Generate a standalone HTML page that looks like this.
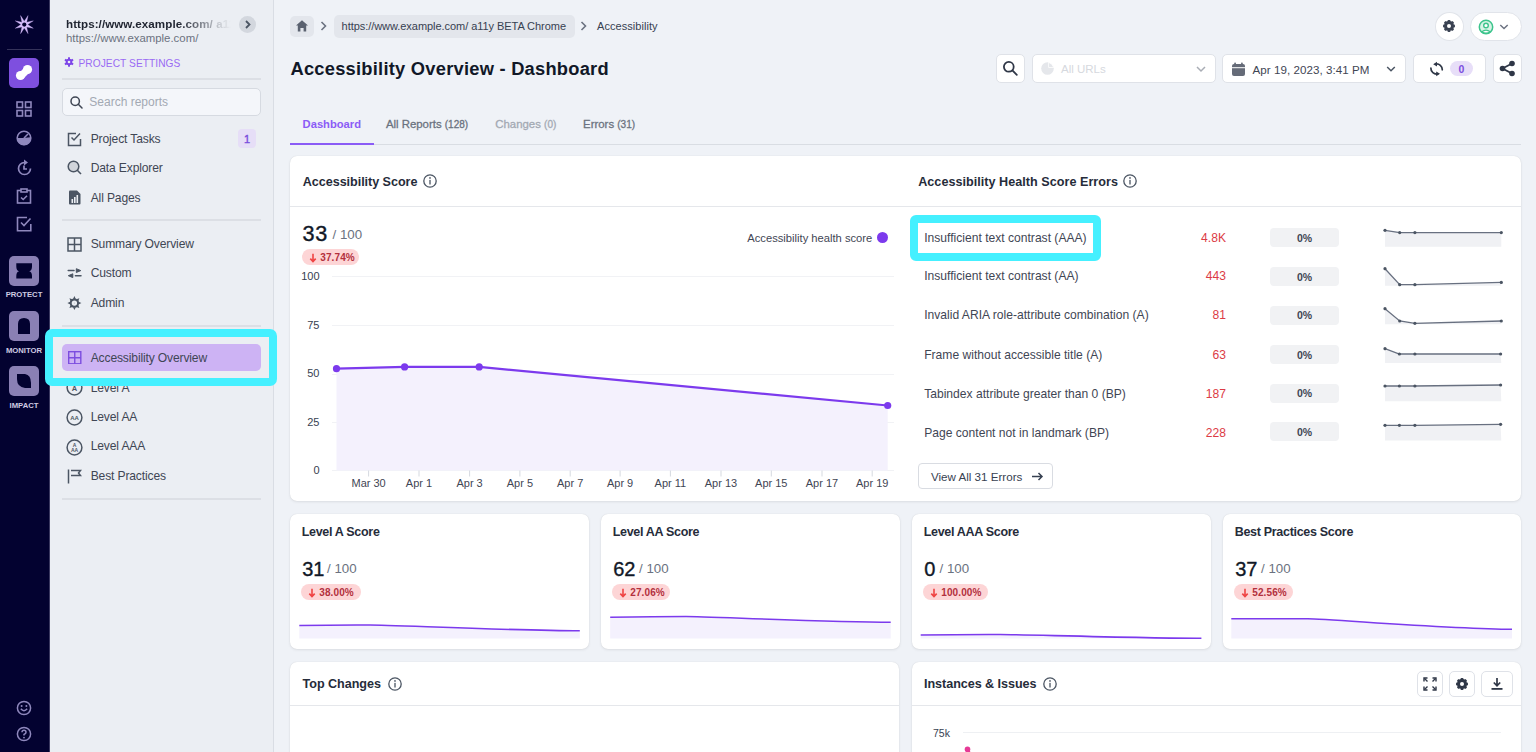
<!DOCTYPE html>
<html><head><meta charset="utf-8"><title>Accessibility Overview - Dashboard</title>
<style>
html,body{margin:0;padding:0;width:1536px;height:752px;overflow:hidden;background:#eff2f7;font-family:"Liberation Sans", sans-serif;}
.r{position:absolute;display:block;}
.t{position:absolute;white-space:nowrap;}
</style></head><body>
<div class="r" style="left:0px;top:0px;width:50px;height:752px;background:#030230;"></div>
<div class="r" style="left:49px;top:0px;width:1px;height:752px;background:#3a3860;"></div>
<svg class="r" style="left:0px;top:0px;" width="50" height="50" viewBox="0 0 50 50"><polygon points="20.55,15.55 21.90,22.20 15.25,20.85 20.90,24.60 15.25,28.35 21.90,27.00 20.55,33.65 24.30,28.00 28.05,33.65 26.70,27.00 33.35,28.35 27.70,24.60 33.35,20.85 26.70,22.20 28.05,15.55 24.30,21.20" fill="#d5bcfb" stroke="#d5bcfb" stroke-width="0.3" stroke-linejoin="round"/><circle cx="24.3" cy="24.6" r="2.1" fill="#030230"/></svg>
<div class="r" style="left:7px;top:49px;width:35px;height:1px;background:#35335a;"></div>
<div class="r" style="left:9px;top:58px;width:30px;height:30px;background:#7e4fdf;border-radius:5px;"></div>
<svg class="r" style="left:9px;top:58px;" width="30" height="30" viewBox="0 0 30 30"><g fill="#fff"><circle cx="11.5" cy="17.5" r="4.6"/><circle cx="18.5" cy="11.5" r="4.6"/><path d="M9 16 L16 9 L21 14 L14 21 Z"/></g></svg>
<svg class="r" style="left:16px;top:101px;" width="16" height="16" viewBox="0 0 16 16"><g fill="none" stroke="#8f88bd" stroke-width="1.6"><rect x="1" y="1" width="5.5" height="5.5"/><rect x="9.5" y="1" width="5.5" height="5.5"/><rect x="1" y="9.5" width="5.5" height="5.5"/><rect x="9.5" y="9.5" width="5.5" height="5.5"/></g></svg>
<svg class="r" style="left:16px;top:130px;" width="16" height="16" viewBox="0 0 16 16"><circle cx="8" cy="8" r="6.8" fill="none" stroke="#8f88bd" stroke-width="1.6"/><path d="M1.2 8 A6.8 6.8 0 0 0 14.8 8 Z" fill="#8f88bd"/><path d="M1.2 8.6 L14.8 7.2 L14.8 8.5 A6.8 6.8 0 0 1 1.2 8.5Z" fill="#8f88bd"/><path d="M8 8 L12 4" stroke="#8f88bd" stroke-width="1.6"/></svg>
<svg class="r" style="left:16px;top:159px;" width="16" height="17" viewBox="0 0 16 17"><g fill="none" stroke="#8f88bd" stroke-width="1.7"><path d="M8.5 3.5 A6 6 0 1 0 14.5 9.5"/><path d="M8 6.5 V10 H11"/></g><path d="M8 0.5 L12 3.5 L8 6.5Z" fill="#8f88bd"/></svg>
<svg class="r" style="left:16px;top:188px;" width="16" height="16" viewBox="0 0 16 16"><g fill="none" stroke="#8f88bd" stroke-width="1.6"><rect x="1.5" y="2.5" width="13" height="12.5"/><rect x="5" y="1" width="6" height="3" fill="#030230"/><path d="M5 9.5 L7.2 11.5 L11 7.8"/></g></svg>
<svg class="r" style="left:16px;top:216px;" width="16" height="16" viewBox="0 0 16 16"><g fill="none" stroke="#8f88bd" stroke-width="1.6"><path d="M11 1.5 H1.5 V14.8 H14.8 V8"/><path d="M5 6.5 L8 9.5 L14.5 2.5"/></g></svg>
<div class="r" style="left:9px;top:256px;width:30px;height:30px;background:#8a80b4;border-radius:5px;"></div>
<svg class="r" style="left:9px;top:256px;" width="30" height="30" viewBox="0 0 30 30"><path d="M7.3 7.3 H23 V10.5 Q23 14.5 20.2 15.2 Q23 16 23 20 V22.6 H7.3 V20 Q7.3 16 10.1 15.2 Q7.3 14.5 7.3 10.5 Z" fill="#030230"/></svg>
<div class="t" style="left:-76px;width:200px;text-align:center;top:291.28px;font-size:7.7px;line-height:7.7px;color:#cfcbe2;font-weight:700;">PROTECT</div>
<div class="r" style="left:9px;top:311px;width:30px;height:30px;background:#8a80b4;border-radius:5px;"></div>
<svg class="r" style="left:9px;top:311px;" width="30" height="30" viewBox="0 0 30 30"><path d="M9 23 V13 Q9 7 15 7 Q21 7 21 13 V23 Z" fill="#030230"/></svg>
<div class="t" style="left:-76px;width:200px;text-align:center;top:346.78px;font-size:7.7px;line-height:7.7px;color:#cfcbe2;font-weight:700;">MONITOR</div>
<div class="r" style="left:9px;top:366px;width:30px;height:30px;background:#8a80b4;border-radius:5px;"></div>
<svg class="r" style="left:9px;top:366px;" width="30" height="30" viewBox="0 0 30 30"><path d="M8 8 H16 Q22 9 22 17 V22 H16 Q8 21 8 13 Z" fill="#030230"/></svg>
<div class="t" style="left:-76px;width:200px;text-align:center;top:401.78px;font-size:7.7px;line-height:7.7px;color:#cfcbe2;font-weight:700;">IMPACT</div>
<svg class="r" style="left:16px;top:700px;" width="16" height="16" viewBox="0 0 16 16"><g fill="none" stroke="#8f88bd" stroke-width="1.5"><circle cx="8" cy="8" r="6.6"/><path d="M4.8 8.8 Q8 12.5 11.2 8.8"/></g><circle cx="5.6" cy="6" r="1" fill="#8f88bd"/><circle cx="10.4" cy="6" r="1" fill="#8f88bd"/></svg>
<svg class="r" style="left:16px;top:726px;" width="16" height="16" viewBox="0 0 16 16"><g fill="none" stroke="#8f88bd" stroke-width="1.5"><circle cx="8" cy="8" r="6.6"/><path d="M6 6.3 Q6 4.3 8 4.3 Q10 4.3 10 6.2 Q10 7.6 8 8.4 V9.6"/></g><circle cx="8" cy="11.6" r="0.9" fill="#8f88bd"/></svg>
<div class="r" style="left:50px;top:0px;width:223px;height:752px;background:#ebeef3;"></div>
<div class="r" style="left:273px;top:0px;width:1px;height:752px;background:#d9dde4;"></div>
<div class="t" style="left:66px;top:17px;width:165px;overflow:hidden;white-space:nowrap;font-size:11.6px;line-height:13px;letter-spacing:0.07px;font-weight:700;color:#1f2430;-webkit-mask-image:linear-gradient(90deg,#000 0,#000 112px,rgba(0,0,0,.55) 135px,rgba(0,0,0,.15) 155px,transparent 165px);">https://www.example.com/ a11y</div>
<div class="t" style="left:66px;top:32.85px;font-size:11.4px;line-height:11.4px;color:#6b7280;font-weight:400;">https://www.example.com/</div>
<div class="r" style="left:239px;top:16px;width:17px;height:17px;background:#d3d7de;border-radius:50%;"></div>
<svg class="r" style="left:239px;top:16px;" width="17" height="17" viewBox="0 0 17 17"><path d="M7 5 L10.5 8.5 L7 12" fill="none" stroke="#4b5563" stroke-width="1.8"/></svg>
<svg class="r" style="left:64px;top:57px;" width="10" height="10" viewBox="0 0 10 10"><g fill="#7d45e8"><circle cx="5" cy="5" r="3.3"/><rect x="4" y="0.3" width="2" height="9.4"/><rect x="4" y="0.3" width="2" height="9.4" transform="rotate(60 5 5)"/><rect x="4" y="0.3" width="2" height="9.4" transform="rotate(120 5 5)"/></g><circle cx="5" cy="5" r="1.3" fill="#ebeef3"/></svg>
<div class="t" style="left:78.5px;top:58.77px;font-size:10.2px;line-height:10.2px;color:#9a6af3;font-weight:400;letter-spacing:0.05px;">PROJECT SETTINGS</div>
<div class="r" style="left:62px;top:78px;width:199px;height:2px;background:#dcdfe5;"></div>
<div class="r" style="left:62px;top:88px;width:199px;height:28px;background:#f4f6fa;border:1px solid #d6dae1;border-radius:5px;box-sizing:border-box;"></div>
<svg class="r" style="left:69px;top:95px;" width="15" height="14" viewBox="0 0 15 14"><g fill="none" stroke="#3f4654" stroke-width="1.5"><circle cx="6.2" cy="6.2" r="4.2"/><path d="M9.3 9.3 L13 13" stroke-linecap="round"/></g></svg>
<div class="t" style="left:89.3px;top:95.84px;font-size:12px;line-height:12px;color:#a3a9b3;font-weight:400;">Search reports</div>
<svg class="r" style="left:67px;top:132px;" width="15" height="15" viewBox="0 0 15 15"><g fill="none" stroke="#4b5563" stroke-width="1.5"><path d="M9 1.5 H1.5 V13.5 H13.5 V7"/><path d="M4.5 5.5 L7 8 L13 1.5"/></g></svg>
<div class="t" style="left:90.7px;top:133.16px;font-size:12.1px;line-height:12.1px;color:#3f4654;font-weight:400;letter-spacing:-0.15px;">Project Tasks</div>
<div class="r" style="left:238px;top:129px;width:18px;height:19px;background:#e6def7;border-radius:4px;"></div>
<div class="t" style="left:147px;width:200px;text-align:center;top:133.69px;font-size:11px;line-height:11px;color:#7a50dd;font-weight:400;-webkit-text-stroke:0.4px #7a50dd;">1</div>
<svg class="r" style="left:67px;top:160px;" width="15" height="15" viewBox="0 0 15 15"><circle cx="6.5" cy="6.5" r="5.3" fill="#d1d5db" stroke="#4b5563" stroke-width="1.5"/><path d="M10.3 10.3 L14 14" stroke="#4b5563" stroke-width="1.6"/></svg>
<div class="t" style="left:90.7px;top:162.46px;font-size:12.1px;line-height:12.1px;color:#3f4654;font-weight:400;letter-spacing:-0.15px;">Data Explorer</div>
<svg class="r" style="left:68px;top:190px;" width="14" height="15" viewBox="0 0 14 15"><path d="M1 1.5 Q1 0.5 2 0.5 H9 L12.5 4 V13.5 Q12.5 14.5 11.5 14.5 H2 Q1 14.5 1 13.5Z" fill="#4b5563"/><g fill="#ebeef3"><rect x="3.5" y="9" width="1.6" height="4"/><rect x="6" y="7" width="1.6" height="6"/><rect x="8.5" y="5" width="1.6" height="8"/></g></svg>
<div class="t" style="left:90.7px;top:191.76px;font-size:12.1px;line-height:12.1px;color:#3f4654;font-weight:400;letter-spacing:-0.15px;">All Pages</div>
<div class="r" style="left:62px;top:219px;width:199px;height:2px;background:#dcdfe5;"></div>
<svg class="r" style="left:67px;top:237px;" width="15" height="15" viewBox="0 0 15 15"><g fill="none" stroke="#4b5563" stroke-width="1.5"><rect x="1" y="1" width="13" height="13"/><path d="M7.5 1 V14 M1 7.5 H14"/></g></svg>
<div class="t" style="left:90.7px;top:237.76px;font-size:12.1px;line-height:12.1px;color:#3f4654;font-weight:400;letter-spacing:-0.15px;">Summary Overview</div>
<svg class="r" style="left:67px;top:264px;" width="15" height="15" viewBox="0 0 15 15"><g stroke="#4b5563" stroke-width="1.5" stroke-linecap="round"><path d="M1.2 6.6 H7 M8.4 11.7 H14"/></g><g fill="#4b5563" stroke="#4b5563" stroke-width="1" stroke-linejoin="round"><path d="M9.3 4.7 L13.8 6.6 L9.3 8.5Z"/><path d="M5.8 9.8 L1.3 11.7 L5.8 13.6Z"/></g></svg>
<div class="t" style="left:90.7px;top:267.46px;font-size:12.1px;line-height:12.1px;color:#3f4654;font-weight:400;letter-spacing:-0.15px;">Custom</div>
<svg class="r" style="left:67px;top:296px;" width="15" height="15" viewBox="0 0 15 15"><path d="M14.40 7.10 L11.47 5.71 L11.47 8.49Z M12.35 12.05 L11.26 8.99 L9.29 10.96Z M7.40 14.10 L8.79 11.17 L6.01 11.17Z M2.45 12.05 L5.51 10.96 L3.54 8.99Z M0.40 7.10 L3.33 8.49 L3.33 5.71Z M2.45 2.15 L3.54 5.21 L5.51 3.24Z M7.40 0.10 L6.01 3.03 L8.79 3.03Z M12.35 2.15 L9.29 3.24 L11.26 5.21Z " fill="#4b5563"/><circle cx="7.4" cy="7.1" r="3.7" fill="none" stroke="#4b5563" stroke-width="2"/><circle cx="7.4" cy="7.1" r="0.6" fill="#c0c4cc"/></svg>
<div class="t" style="left:90.7px;top:297.06px;font-size:12.1px;line-height:12.1px;color:#3f4654;font-weight:400;letter-spacing:-0.15px;">Admin</div>
<div class="r" style="left:62px;top:325px;width:199px;height:2px;background:#dcdfe5;"></div>
<svg class="r" style="left:66px;top:379px;" width="17" height="17" viewBox="0 0 17 17"><circle cx="8.5" cy="8.5" r="7.4" fill="none" stroke="#4b5563" stroke-width="1.5"/><text x="8.5" y="11.5" font-size="7.5" font-family="Liberation Sans" font-weight="700" fill="#4b5563" text-anchor="middle">A</text></svg>
<div class="t" style="left:90.7px;top:381.76px;font-size:12.1px;line-height:12.1px;color:#3f4654;font-weight:400;letter-spacing:-0.15px;">Level A</div>
<svg class="r" style="left:66px;top:409px;" width="17" height="17" viewBox="0 0 17 17"><circle cx="8.5" cy="8.5" r="7.4" fill="none" stroke="#4b5563" stroke-width="1.5"/><text x="8.5" y="11" font-size="6" font-family="Liberation Sans" font-weight="700" fill="#4b5563" text-anchor="middle">AA</text></svg>
<div class="t" style="left:90.7px;top:410.56px;font-size:12.1px;line-height:12.1px;color:#3f4654;font-weight:400;letter-spacing:-0.15px;">Level AA</div>
<svg class="r" style="left:66px;top:438.5px;" width="17" height="17" viewBox="0 0 17 17"><circle cx="8.5" cy="8.5" r="7.4" fill="none" stroke="#4b5563" stroke-width="1.5"/><text x="8.5" y="8" font-size="5" font-family="Liberation Sans" font-weight="700" fill="#4b5563" text-anchor="middle">A</text><text x="8.5" y="13" font-size="5" font-family="Liberation Sans" font-weight="700" fill="#4b5563" text-anchor="middle">AA</text></svg>
<div class="t" style="left:90.7px;top:440.36px;font-size:12.1px;line-height:12.1px;color:#3f4654;font-weight:400;letter-spacing:-0.15px;">Level AAA</div>
<svg class="r" style="left:67px;top:469px;" width="15" height="15" viewBox="0 0 15 15"><g fill="none" stroke="#4b5563" stroke-width="1.5"><path d="M1.5 0.5 V14.5"/><path d="M4 1.5 H13.5 L11.5 4 L13.5 6.5 H4"/></g></svg>
<div class="t" style="left:90.7px;top:469.96px;font-size:12.1px;line-height:12.1px;color:#3f4654;font-weight:400;letter-spacing:-0.15px;">Best Practices</div>
<div class="r" style="left:62px;top:498px;width:199px;height:2px;background:#dcdfe5;"></div>
<div class="r" style="left:62px;top:344px;width:199px;height:27px;background:#cdb3f4;border-radius:5px;"></div>
<svg class="r" style="left:68px;top:350.5px;" width="13.5" height="13.5" viewBox="0 0 13.5 13.5"><g fill="none" stroke="#7c4ddf" stroke-width="1.4"><rect x="0.7" y="0.7" width="12.1" height="12.1"/><path d="M6.75 0.7 V12.8 M0.7 6.75 H12.8"/></g></svg>
<div class="t" style="left:90.7px;top:351.76px;font-size:12.1px;line-height:12.1px;color:#3f4654;font-weight:400;letter-spacing:-0.15px;">Accessibility Overview</div>
<div class="r" style="left:45px;top:329px;width:232px;height:57px;border:8px solid #45f0ff;border-radius:7px;box-sizing:border-box;z-index:20;"></div>
<div class="r" style="left:274px;top:0px;width:1262px;height:752px;background:#eff2f7;"></div>
<div class="r" style="left:290px;top:16px;width:24px;height:21px;background:#e3e6ec;border-radius:5px;"></div>
<svg class="r" style="left:294px;top:18px;" width="16" height="16" viewBox="0 0 16 16"><path d="M8 2.2 L14 7.6 H12.2 V13.5 H9.6 V10 H6.4 V13.5 H3.8 V7.6 H2 Z" fill="#5b6270"/></svg>
<svg class="r" style="left:318px;top:18px;" width="12" height="16" viewBox="0 0 12 16"><path d="M3.5 4 L7.5 8 L3.5 12" fill="none" stroke="#6b7280" stroke-width="1.6"/></svg>
<div class="r" style="left:334px;top:15px;width:241px;height:22.5px;background:#e3e6ec;border-radius:5px;"></div>
<div class="t" style="left:341.6px;top:20.69px;font-size:11px;line-height:11px;color:#374151;font-weight:400;letter-spacing:-0.05px;">https://www.example.com/ a11y BETA Chrome</div>
<svg class="r" style="left:578px;top:18px;" width="12" height="16" viewBox="0 0 12 16"><path d="M3.5 4 L7.5 8 L3.5 12" fill="none" stroke="#6b7280" stroke-width="1.6"/></svg>
<div class="t" style="left:597px;top:20.69px;font-size:11px;line-height:11px;color:#374151;font-weight:400;letter-spacing:0.05px;">Accessibility</div>
<div class="t" style="left:290.5px;top:59.51px;font-size:18.3px;line-height:18.3px;color:#111827;font-weight:700;letter-spacing:0.25px;">Accessibility Overview - Dashboard</div>
<div class="r" style="left:1434.5px;top:12.3px;width:29px;height:28.5px;background:#fff;border:1px solid #e1e4ea;border-radius:50%;box-sizing:border-box;"></div>
<svg class="r" style="left:1441px;top:18.3px;" width="16" height="16" viewBox="0 0 16 16"><g fill="#3a4252"><circle cx="8" cy="8" r="4.9"/><rect x="6.5" y="2" width="3" height="12" rx="1"/><rect x="6.5" y="2" width="3" height="12" rx="1" transform="rotate(45 8 8)"/><rect x="6.5" y="2" width="3" height="12" rx="1" transform="rotate(90 8 8)"/><rect x="6.5" y="2" width="3" height="12" rx="1" transform="rotate(135 8 8)"/></g><circle cx="8" cy="8" r="2" fill="#fff"/></svg>
<div class="r" style="left:1470px;top:12.3px;width:51.5px;height:28.5px;background:#fff;border:1px solid #e1e4ea;border-radius:14.5px;box-sizing:border-box;"></div>
<svg class="r" style="left:1478px;top:18.5px;" width="16" height="16" viewBox="0 0 16 16"><circle cx="8" cy="8" r="6.7" fill="#d8f3e6" stroke="#3cc48c" stroke-width="1.5"/><g fill="#fff" stroke="#3cc48c" stroke-width="1.4"><circle cx="8" cy="6.5" r="2.3"/><path d="M3.8 12.8 Q8 9.4 12.2 12.8 Q8 15.6 3.8 12.8Z"/></g></svg>
<svg class="r" style="left:1498px;top:21.5px;" width="12" height="10" viewBox="0 0 12 10"><path d="M2.3 3 L6 6.6 L9.7 3" fill="none" stroke="#6b7280" stroke-width="1.4"/></svg>
<div class="r" style="left:996px;top:54px;width:29px;height:29px;background:#fff;border:1px solid #dfe2e8;border-radius:5px;box-sizing:border-box;"></div>
<svg class="r" style="left:1002px;top:60px;" width="17" height="17" viewBox="0 0 17 17"><g fill="none" stroke="#2f3747" stroke-width="1.8"><circle cx="6.8" cy="6.8" r="4.9"/><path d="M10.4 10.4 L14.8 14.8" stroke-linecap="round"/></g></svg>
<div class="r" style="left:1032px;top:54px;width:184px;height:29px;background:#fff;border:1px solid #dfe2e8;border-radius:5px;box-sizing:border-box;"></div>
<svg class="r" style="left:1040px;top:61px;" width="15" height="15" viewBox="0 0 15 15"><circle cx="7.5" cy="7.5" r="6.3" fill="#e5e7eb"/><path d="M8.3 1 A6.5 6.5 0 0 1 14 6.7 H8.3Z" fill="#fff"/><path d="M9 2 A5.5 5.5 0 0 1 13 6 H9Z" fill="#e5e7eb"/></svg>
<div class="t" style="left:1061px;top:64.27px;font-size:11.5px;line-height:11.5px;color:#d6d9de;font-weight:400;">All URLs</div>
<svg class="r" style="left:1194.5px;top:63.5px;" width="12" height="10" viewBox="0 0 12 10"><path d="M2 3 L6 7 L10 3" fill="none" stroke="#a9adb5" stroke-width="1.5"/></svg>
<div class="r" style="left:1222px;top:54px;width:184px;height:29px;background:#fff;border:1px solid #dfe2e8;border-radius:5px;box-sizing:border-box;"></div>
<svg class="r" style="left:1231px;top:61px;" width="16" height="16" viewBox="0 0 16 16"><rect x="1" y="3" width="13" height="12" rx="2" fill="#656b78"/><rect x="1" y="6.2" width="13" height="1" fill="#fff"/><rect x="3.3" y="1.6" width="1.6" height="3" rx="0.6" fill="#656b78"/><rect x="10.1" y="1.6" width="1.6" height="3" rx="0.6" fill="#656b78"/></svg>
<div class="t" style="left:1252.5px;top:63.98px;font-size:11.6px;line-height:11.6px;color:#3f4654;font-weight:400;letter-spacing:0.05px;">Apr 19, 2023, 3:41 PM</div>
<svg class="r" style="left:1385px;top:63.5px;" width="12" height="10" viewBox="0 0 12 10"><path d="M2.2 3 L6 6.8 L9.8 3" fill="none" stroke="#4b5563" stroke-width="1.5"/></svg>
<div class="r" style="left:1413px;top:54px;width:73px;height:29px;background:#fff;border:1px solid #dfe2e8;border-radius:5px;box-sizing:border-box;"></div>
<svg class="r" style="left:1428px;top:61px;" width="16" height="16" viewBox="0 0 16 16"><g fill="none" stroke="#2f3747" stroke-width="1.7" stroke-linecap="round"><path d="M14.3 8.8 A5.6 5.6 0 0 0 7.6 3.1"/><path d="M2.9 7.2 A5.6 5.6 0 0 0 9.6 12.9"/></g><path d="M9 0.8 L5.2 3.2 L9 5.6Z" fill="#2f3747"/><path d="M8.2 10.4 L12 12.8 L8.2 15.2Z" fill="#2f3747"/></svg>
<div class="r" style="left:1450px;top:61px;width:23px;height:15px;background:#e7def8;border-radius:8px;"></div>
<div class="t" style="left:1361.5px;width:200px;text-align:center;top:63.61px;font-size:10.5px;line-height:10.5px;color:#7c4ddf;font-weight:700;">0</div>
<div class="r" style="left:1492.5px;top:54px;width:29px;height:29px;background:#fff;border:1px solid #dfe2e8;border-radius:5px;box-sizing:border-box;"></div>
<svg class="r" style="left:1499px;top:60px;" width="17" height="17" viewBox="0 0 17 17"><g fill="#2f3747"><circle cx="13" cy="3.5" r="2.8"/><circle cx="3.5" cy="8.5" r="2.8"/><circle cx="13" cy="13.5" r="2.8"/></g><path d="M13 3.5 L3.5 8.5 L13 13.5" fill="none" stroke="#2f3747" stroke-width="1.8"/></svg>
<div class="t" style="left:302.6px;top:118.82px;font-size:11.2px;line-height:11.2px;color:#8b5cf6;font-weight:700;">Dashboard</div>
<div class="t" style="left:385.9px;top:118.65px;font-size:11.4px;line-height:11.4px;color:#6b7280;font-weight:400;-webkit-text-stroke:0.3px #6b7280;">All Reports <span style="font-size:10px">(128)</span></div>
<div class="t" style="left:495.3px;top:118.65px;font-size:11.4px;line-height:11.4px;color:#a3a9b3;font-weight:400;-webkit-text-stroke:0.3px #a3a9b3;">Changes <span style="font-size:10px">(0)</span></div>
<div class="t" style="left:583.1px;top:118.65px;font-size:11.4px;line-height:11.4px;color:#6b7280;font-weight:400;-webkit-text-stroke:0.3px #6b7280;">Errors <span style="font-size:10px">(31)</span></div>
<div class="r" style="left:290px;top:143.5px;width:1231px;height:1px;background:#d9dde3;"></div>
<div class="r" style="left:290px;top:142.5px;width:84px;height:2px;background:#8b5cf6;"></div>
<div class="r" style="left:290px;top:156px;width:1231px;height:345px;background:#fff;border-radius:7px;box-shadow:0 1px 3px rgba(0,0,0,0.08),0 0 1px rgba(0,0,0,0.12);"></div>
<div class="r" style="left:290px;top:206px;width:1231px;height:1px;background:#e5e7eb;"></div>
<div class="t" style="left:302.8px;top:175.63px;font-size:12.6px;line-height:12.6px;color:#262c3a;font-weight:700;letter-spacing:-0.05px;">Accessibility Score</div>
<svg class="r" style="left:423px;top:174px;" width="14" height="14" viewBox="0 0 14 14"><circle cx="7.0" cy="7.0" r="6.2" fill="none" stroke="#4b5563" stroke-width="1.3"/><rect x="6.35" y="5.88" width="1.3" height="4.62" fill="#4b5563"/><circle cx="7.0" cy="3.9200000000000004" r="0.85" fill="#4b5563"/></svg>
<div class="t" style="left:918.2px;top:175.63px;font-size:12.6px;line-height:12.6px;color:#262c3a;font-weight:700;letter-spacing:0.03px;">Accessibility Health Score Errors</div>
<svg class="r" style="left:1123px;top:174px;" width="14" height="14" viewBox="0 0 14 14"><circle cx="7.0" cy="7.0" r="6.2" fill="none" stroke="#4b5563" stroke-width="1.3"/><rect x="6.35" y="5.88" width="1.3" height="4.62" fill="#4b5563"/><circle cx="7.0" cy="3.9200000000000004" r="0.85" fill="#4b5563"/></svg>
<div class="t" style="left:302.6px;top:222.62px;font-size:21.6px;line-height:21.6px;color:#111827;font-weight:400;letter-spacing:0.7px;-webkit-text-stroke:0.4px #111827;">33</div>
<div class="t" style="left:332.5px;top:227.74px;font-size:13.3px;line-height:13.3px;color:#6b7280;font-weight:400;">/ 100</div>
<div class="r" style="left:302px;top:249px;width:57px;height:16px;background:#fdd5d6;border-radius:8px;"></div>
<svg class="r" style="left:309px;top:252.5px;" width="8" height="10" viewBox="0 0 8 10"><path d="M4 0.8 V8.5 M1.3 5.6 L4 8.5 L6.7 5.6" fill="none" stroke="#ef4444" stroke-width="1.6"/></svg>
<div class="t" style="left:320.3px;top:252.73px;font-size:10px;line-height:10px;color:#b3303d;font-weight:700;letter-spacing:0.1px;">37.74%</div>
<div class="t" style="left:747.3px;top:232.82px;font-size:11.2px;line-height:11.2px;color:#3f4654;font-weight:400;">Accessibility health score</div>
<div class="r" style="left:877px;top:232.3px;width:11px;height:11px;background:#7c3aed;border-radius:50%;"></div>
<div class="t" style="right:1216.5px;top:271.19px;font-size:11px;line-height:11px;color:#374151;font-weight:400;text-align:right;">100</div>
<div class="r" style="left:332px;top:276px;width:562px;height:1px;background:#f1f2f5;"></div>
<div class="t" style="right:1216.5px;top:319.79px;font-size:11px;line-height:11px;color:#374151;font-weight:400;text-align:right;">75</div>
<div class="r" style="left:332px;top:325px;width:562px;height:1px;background:#f1f2f5;"></div>
<div class="t" style="right:1216.5px;top:368.49px;font-size:11px;line-height:11px;color:#374151;font-weight:400;text-align:right;">50</div>
<div class="r" style="left:332px;top:374px;width:562px;height:1px;background:#f1f2f5;"></div>
<div class="t" style="right:1216.5px;top:416.89px;font-size:11px;line-height:11px;color:#374151;font-weight:400;text-align:right;">25</div>
<div class="r" style="left:332px;top:422px;width:562px;height:1px;background:#f1f2f5;"></div>
<div class="t" style="right:1216.5px;top:465.19px;font-size:11px;line-height:11px;color:#374151;font-weight:400;text-align:right;">0</div>
<div class="r" style="left:332px;top:470px;width:562px;height:1px;background:#f1f2f5;"></div>
<svg class="r" style="left:290px;top:260px;" width="620" height="230" viewBox="0 0 620 230"><polygon points="46.5,108.69999999999999 114.60000000000002,106.89999999999998 189.2,106.89999999999998 597.7,145.5 597.7,210.5 46.5,210.5" fill="#f4f1fd"/><line x1="78.6" y1="210.5" x2="78.6" y2="216.5" stroke="#d5d9e0" stroke-width="1"/><line x1="129.0" y1="210.5" x2="129.0" y2="216.5" stroke="#d5d9e0" stroke-width="1"/><line x1="179.6" y1="210.5" x2="179.6" y2="216.5" stroke="#d5d9e0" stroke-width="1"/><line x1="229.9" y1="210.5" x2="229.9" y2="216.5" stroke="#d5d9e0" stroke-width="1"/><line x1="280.2" y1="210.5" x2="280.2" y2="216.5" stroke="#d5d9e0" stroke-width="1"/><line x1="330.1" y1="210.5" x2="330.1" y2="216.5" stroke="#d5d9e0" stroke-width="1"/><line x1="380.4" y1="210.5" x2="380.4" y2="216.5" stroke="#d5d9e0" stroke-width="1"/><line x1="431.0" y1="210.5" x2="431.0" y2="216.5" stroke="#d5d9e0" stroke-width="1"/><line x1="481.3" y1="210.5" x2="481.3" y2="216.5" stroke="#d5d9e0" stroke-width="1"/><line x1="532.0" y1="210.5" x2="532.0" y2="216.5" stroke="#d5d9e0" stroke-width="1"/><line x1="582.2" y1="210.5" x2="582.2" y2="216.5" stroke="#d5d9e0" stroke-width="1"/><polyline points="46.5,108.69999999999999 114.60000000000002,106.89999999999998 189.2,106.89999999999998 597.7,145.5" fill="none" stroke="#7c3aed" stroke-width="2.2"/><circle cx="46.5" cy="108.69999999999999" r="3.6" fill="#7c3aed"/><circle cx="114.60000000000002" cy="106.89999999999998" r="3.6" fill="#7c3aed"/><circle cx="189.2" cy="106.89999999999998" r="3.6" fill="#7c3aed"/><circle cx="597.7" cy="145.5" r="3.6" fill="#7c3aed"/></svg>
<div class="t" style="left:268.6px;width:200px;text-align:center;top:477.89px;font-size:11px;line-height:11px;color:#3f4654;font-weight:400;">Mar 30</div>
<div class="t" style="left:319px;width:200px;text-align:center;top:477.89px;font-size:11px;line-height:11px;color:#3f4654;font-weight:400;">Apr 1</div>
<div class="t" style="left:369.6px;width:200px;text-align:center;top:477.89px;font-size:11px;line-height:11px;color:#3f4654;font-weight:400;">Apr 3</div>
<div class="t" style="left:419.9px;width:200px;text-align:center;top:477.89px;font-size:11px;line-height:11px;color:#3f4654;font-weight:400;">Apr 5</div>
<div class="t" style="left:470.20000000000005px;width:200px;text-align:center;top:477.89px;font-size:11px;line-height:11px;color:#3f4654;font-weight:400;">Apr 7</div>
<div class="t" style="left:520.1px;width:200px;text-align:center;top:477.89px;font-size:11px;line-height:11px;color:#3f4654;font-weight:400;">Apr 9</div>
<div class="t" style="left:570.4px;width:200px;text-align:center;top:477.89px;font-size:11px;line-height:11px;color:#3f4654;font-weight:400;">Apr 11</div>
<div class="t" style="left:621px;width:200px;text-align:center;top:477.89px;font-size:11px;line-height:11px;color:#3f4654;font-weight:400;">Apr 13</div>
<div class="t" style="left:671.3px;width:200px;text-align:center;top:477.89px;font-size:11px;line-height:11px;color:#3f4654;font-weight:400;">Apr 15</div>
<div class="t" style="left:722px;width:200px;text-align:center;top:477.89px;font-size:11px;line-height:11px;color:#3f4654;font-weight:400;">Apr 17</div>
<div class="t" style="left:772.2px;width:200px;text-align:center;top:477.89px;font-size:11px;line-height:11px;color:#3f4654;font-weight:400;">Apr 19</div>
<div class="t" style="left:924.2px;top:232.26px;font-size:12.1px;line-height:12.1px;color:#3f4654;font-weight:400;">Insufficient text contrast (AAA)</div>
<div class="t" style="right:310px;top:232.26px;font-size:12.1px;line-height:12.1px;color:#dc3b45;font-weight:400;text-align:right;">4.8K</div>
<div class="r" style="left:1270px;top:228px;width:69px;height:19px;background:#f1f2f4;border-radius:4px;"></div>
<div class="t" style="left:1204.5px;width:200px;text-align:center;top:233.11px;font-size:10.5px;line-height:10.5px;color:#3f4654;font-weight:700;">0%</div>
<svg class="r" style="left:1384.5px;top:225px;margin-left:-2px;overflow:visible;" width="118" height="34" viewBox="0 0 118 34"><g transform="translate(2 0)"><polygon points="0.0,5.3 14.7,7.6 29.9,7.6 116.3,7.6 116.3,21.8 0,21.8" fill="#f0f1f4"/><polyline points="0.0,5.3 14.7,7.6 29.9,7.6 116.3,7.6" fill="none" stroke="#687080" stroke-width="1.3"/><circle cx="0.0" cy="5.3" r="1.6" fill="#4b5563"/><circle cx="14.7" cy="7.6" r="1.6" fill="#4b5563"/><circle cx="29.9" cy="7.6" r="1.6" fill="#4b5563"/><circle cx="116.3" cy="7.6" r="1.6" fill="#4b5563"/></g></svg>
<div class="t" style="left:924.2px;top:270.36px;font-size:12.1px;line-height:12.1px;color:#3f4654;font-weight:400;">Insufficient text contrast (AA)</div>
<div class="t" style="right:310px;top:270.36px;font-size:12.1px;line-height:12.1px;color:#dc3b45;font-weight:400;text-align:right;">443</div>
<div class="r" style="left:1270px;top:267px;width:69px;height:19px;background:#f1f2f4;border-radius:4px;"></div>
<div class="t" style="left:1204.5px;width:200px;text-align:center;top:271.91px;font-size:10.5px;line-height:10.5px;color:#3f4654;font-weight:700;">0%</div>
<svg class="r" style="left:1384.5px;top:264px;margin-left:-2px;overflow:visible;" width="118" height="34" viewBox="0 0 118 34"><g transform="translate(2 0)"><polygon points="0.0,4.7 14.7,20.7 29.9,20.7 116.3,18.4 116.3,21.7 0,21.7" fill="#f0f1f4"/><polyline points="0.0,4.7 14.7,20.7 29.9,20.7 116.3,18.4" fill="none" stroke="#687080" stroke-width="1.3"/><circle cx="0.0" cy="4.7" r="1.6" fill="#4b5563"/><circle cx="14.7" cy="20.7" r="1.6" fill="#4b5563"/><circle cx="29.9" cy="20.7" r="1.6" fill="#4b5563"/><circle cx="116.3" cy="18.4" r="1.6" fill="#4b5563"/></g></svg>
<div class="t" style="left:924.2px;top:309.46px;font-size:12.1px;line-height:12.1px;color:#3f4654;font-weight:400;">Invalid ARIA role-attribute combination (A)</div>
<div class="t" style="right:310px;top:309.46px;font-size:12.1px;line-height:12.1px;color:#dc3b45;font-weight:400;text-align:right;">81</div>
<div class="r" style="left:1270px;top:306px;width:69px;height:19px;background:#f1f2f4;border-radius:4px;"></div>
<div class="t" style="left:1204.5px;width:200px;text-align:center;top:310.41px;font-size:10.5px;line-height:10.5px;color:#3f4654;font-weight:700;">0%</div>
<svg class="r" style="left:1384.5px;top:302px;margin-left:-2px;overflow:visible;" width="118" height="34" viewBox="0 0 118 34"><g transform="translate(2 0)"><polygon points="0.0,6.7 14.7,19.0 29.9,21.3 116.3,19.0 116.3,22.3 0,22.3" fill="#f0f1f4"/><polyline points="0.0,6.7 14.7,19.0 29.9,21.3 116.3,19.0" fill="none" stroke="#687080" stroke-width="1.3"/><circle cx="0.0" cy="6.7" r="1.6" fill="#4b5563"/><circle cx="14.7" cy="19.0" r="1.6" fill="#4b5563"/><circle cx="29.9" cy="21.3" r="1.6" fill="#4b5563"/><circle cx="116.3" cy="19.0" r="1.6" fill="#4b5563"/></g></svg>
<div class="t" style="left:924.2px;top:349.16px;font-size:12.1px;line-height:12.1px;color:#3f4654;font-weight:400;">Frame without accessible title (A)</div>
<div class="t" style="right:310px;top:349.16px;font-size:12.1px;line-height:12.1px;color:#dc3b45;font-weight:400;text-align:right;">63</div>
<div class="r" style="left:1270px;top:345px;width:69px;height:19px;background:#f1f2f4;border-radius:4px;"></div>
<div class="t" style="left:1204.5px;width:200px;text-align:center;top:349.61px;font-size:10.5px;line-height:10.5px;color:#3f4654;font-weight:700;">0%</div>
<svg class="r" style="left:1384.5px;top:342px;margin-left:-2px;overflow:visible;" width="118" height="34" viewBox="0 0 118 34"><g transform="translate(2 0)"><polygon points="0.0,6.7 14.4,12.0 29.9,12.0 115.6,12.0 116.3,21.0 0,21.0" fill="#f0f1f4"/><polyline points="0.0,6.7 14.4,12.0 29.9,12.0 115.6,12.0" fill="none" stroke="#687080" stroke-width="1.3"/><circle cx="0.0" cy="6.7" r="1.6" fill="#4b5563"/><circle cx="14.4" cy="12.0" r="1.6" fill="#4b5563"/><circle cx="29.9" cy="12.0" r="1.6" fill="#4b5563"/><circle cx="115.6" cy="12.0" r="1.6" fill="#4b5563"/></g></svg>
<div class="t" style="left:924.2px;top:387.56px;font-size:12.1px;line-height:12.1px;color:#3f4654;font-weight:400;">Tabindex attribute greater than 0 (BP)</div>
<div class="t" style="right:310px;top:387.56px;font-size:12.1px;line-height:12.1px;color:#dc3b45;font-weight:400;text-align:right;">187</div>
<div class="r" style="left:1270px;top:384px;width:69px;height:19px;background:#f1f2f4;border-radius:4px;"></div>
<div class="t" style="left:1204.5px;width:200px;text-align:center;top:388.11px;font-size:10.5px;line-height:10.5px;color:#3f4654;font-weight:700;">0%</div>
<svg class="r" style="left:1384.5px;top:380px;margin-left:-2px;overflow:visible;" width="118" height="34" viewBox="0 0 118 34"><g transform="translate(2 0)"><polygon points="0.0,6.0 14.4,6.0 29.9,6.0 115.6,5.0 116.3,21.3 0,21.3" fill="#f0f1f4"/><polyline points="0.0,6.0 14.4,6.0 29.9,6.0 115.6,5.0" fill="none" stroke="#687080" stroke-width="1.3"/><circle cx="0.0" cy="6.0" r="1.6" fill="#4b5563"/><circle cx="14.4" cy="6.0" r="1.6" fill="#4b5563"/><circle cx="29.9" cy="6.0" r="1.6" fill="#4b5563"/><circle cx="115.6" cy="5.0" r="1.6" fill="#4b5563"/></g></svg>
<div class="t" style="left:924.2px;top:426.56px;font-size:12.1px;line-height:12.1px;color:#3f4654;font-weight:400;">Page content not in landmark (BP)</div>
<div class="t" style="right:310px;top:426.56px;font-size:12.1px;line-height:12.1px;color:#dc3b45;font-weight:400;text-align:right;">228</div>
<div class="r" style="left:1270px;top:422px;width:69px;height:19px;background:#f1f2f4;border-radius:4px;"></div>
<div class="t" style="left:1204.5px;width:200px;text-align:center;top:426.81px;font-size:10.5px;line-height:10.5px;color:#3f4654;font-weight:700;">0%</div>
<svg class="r" style="left:1384.5px;top:419px;margin-left:-2px;overflow:visible;" width="118" height="34" viewBox="0 0 118 34"><g transform="translate(2 0)"><polygon points="0.0,6.3 14.4,6.3 29.9,6.3 115.6,5.3 116.3,21.6 0,21.6" fill="#f0f1f4"/><polyline points="0.0,6.3 14.4,6.3 29.9,6.3 115.6,5.3" fill="none" stroke="#687080" stroke-width="1.3"/><circle cx="0.0" cy="6.3" r="1.6" fill="#4b5563"/><circle cx="14.4" cy="6.3" r="1.6" fill="#4b5563"/><circle cx="29.9" cy="6.3" r="1.6" fill="#4b5563"/><circle cx="115.6" cy="5.3" r="1.6" fill="#4b5563"/></g></svg>
<div class="r" style="left:918px;top:463px;width:135px;height:26px;background:#fff;border:1px solid #d9dce2;border-radius:4px;box-sizing:border-box;"></div>
<div class="t" style="left:931px;top:470.98px;font-size:11.6px;line-height:11.6px;color:#374151;font-weight:400;">View All 31 Errors</div>
<svg class="r" style="left:1031px;top:470px;" width="13" height="13" viewBox="0 0 13 13"><path d="M1 6.5 H11 M7.5 3 L11 6.5 L7.5 10" fill="none" stroke="#374151" stroke-width="1.5"/></svg>
<div class="r" style="left:910px;top:215px;width:191px;height:46px;border:8px solid #45f0ff;border-radius:6px;box-sizing:border-box;"></div>
<div class="r" style="left:290px;top:514px;width:299px;height:135px;background:#fff;border-radius:7px;box-shadow:0 1px 3px rgba(0,0,0,0.08),0 0 1px rgba(0,0,0,0.12);"></div>
<div class="t" style="left:301.7px;top:526.42px;font-size:12.5px;line-height:12.5px;color:#262c3a;font-weight:700;letter-spacing:-0.3px;">Level A Score</div>
<div class="t" style="left:302.3px;top:558.77px;font-size:20px;line-height:20px;color:#111827;font-weight:400;letter-spacing:-0.2px;-webkit-text-stroke:0.35px #111827;">31</div>
<div class="t" style="left:327.0px;top:562.34px;font-size:13.3px;line-height:13.3px;color:#6b7280;font-weight:400;">/ 100</div>
<div class="r" style="left:301px;top:584px;width:60px;height:16px;background:#fdd5d6;border-radius:8px;"></div>
<svg class="r" style="left:308px;top:587.5px;" width="8" height="10" viewBox="0 0 8 10"><path d="M4 0.8 V8.5 M1.3 5.6 L4 8.5 L6.7 5.6" fill="none" stroke="#ef4444" stroke-width="1.6"/></svg>
<div class="t" style="left:319.3px;top:587.74px;font-size:10px;line-height:10px;color:#b3303d;font-weight:700;letter-spacing:0.1px;">38.00%</div>
<svg class="r" style="left:290px;top:600px;" width="300" height="50" viewBox="0 0 300 50"><path d="M9.300000000000011,25.5 C50,25 60,25 80,25 S229.79999999999995,30.799999999999955 289.79999999999995,30.799999999999955 L289.79999999999995,38.60000000000002 L9.300000000000011,38.60000000000002 Z" fill="#f4f1fd"/><path d="M9.300000000000011,25.5 C50,25 60,25 80,25 S229.79999999999995,30.799999999999955 289.79999999999995,30.799999999999955" fill="none" stroke="#7c3aed" stroke-width="1.6"/></svg>
<div class="r" style="left:601px;top:514px;width:299px;height:135px;background:#fff;border-radius:7px;box-shadow:0 1px 3px rgba(0,0,0,0.08),0 0 1px rgba(0,0,0,0.12);"></div>
<div class="t" style="left:612.7px;top:526.42px;font-size:12.5px;line-height:12.5px;color:#262c3a;font-weight:700;letter-spacing:-0.3px;">Level AA Score</div>
<div class="t" style="left:613.3px;top:558.77px;font-size:20px;line-height:20px;color:#111827;font-weight:400;letter-spacing:-0.2px;-webkit-text-stroke:0.35px #111827;">62</div>
<div class="t" style="left:639.0px;top:562.34px;font-size:13.3px;line-height:13.3px;color:#6b7280;font-weight:400;">/ 100</div>
<div class="r" style="left:612px;top:584px;width:58px;height:16px;background:#fdd5d6;border-radius:8px;"></div>
<svg class="r" style="left:619px;top:587.5px;" width="8" height="10" viewBox="0 0 8 10"><path d="M4 0.8 V8.5 M1.3 5.6 L4 8.5 L6.7 5.6" fill="none" stroke="#ef4444" stroke-width="1.6"/></svg>
<div class="t" style="left:630.3px;top:587.74px;font-size:10px;line-height:10px;color:#b3303d;font-weight:700;letter-spacing:0.1px;">27.06%</div>
<svg class="r" style="left:601px;top:600px;" width="300" height="50" viewBox="0 0 300 50"><path d="M9.200000000000045,17.299999999999955 C55,16.5 65,16.5 85,16.5 S229.70000000000005,22.200000000000045 289.70000000000005,22.200000000000045 L289.70000000000005,38.60000000000002 L9.200000000000045,38.60000000000002 Z" fill="#f4f1fd"/><path d="M9.200000000000045,17.299999999999955 C55,16.5 65,16.5 85,16.5 S229.70000000000005,22.200000000000045 289.70000000000005,22.200000000000045" fill="none" stroke="#7c3aed" stroke-width="1.6"/></svg>
<div class="r" style="left:912px;top:514px;width:299px;height:135px;background:#fff;border-radius:7px;box-shadow:0 1px 3px rgba(0,0,0,0.08),0 0 1px rgba(0,0,0,0.12);"></div>
<div class="t" style="left:923.7px;top:526.42px;font-size:12.5px;line-height:12.5px;color:#262c3a;font-weight:700;letter-spacing:-0.3px;">Level AAA Score</div>
<div class="t" style="left:924.3px;top:558.77px;font-size:20px;line-height:20px;color:#111827;font-weight:400;letter-spacing:-0.2px;-webkit-text-stroke:0.35px #111827;">0</div>
<div class="t" style="left:939.5px;top:562.34px;font-size:13.3px;line-height:13.3px;color:#6b7280;font-weight:400;">/ 100</div>
<div class="r" style="left:923px;top:584px;width:65px;height:16px;background:#fdd5d6;border-radius:8px;"></div>
<svg class="r" style="left:930px;top:587.5px;" width="8" height="10" viewBox="0 0 8 10"><path d="M4 0.8 V8.5 M1.3 5.6 L4 8.5 L6.7 5.6" fill="none" stroke="#ef4444" stroke-width="1.6"/></svg>
<div class="t" style="left:941.3px;top:587.74px;font-size:10px;line-height:10px;color:#b3303d;font-weight:700;letter-spacing:0.1px;">100.00%</div>
<svg class="r" style="left:912px;top:600px;" width="300" height="50" viewBox="0 0 300 50"><path d="M8.700000000000045,35 C58,34.5 68,34.5 88,34.5 S229.4000000000001,38.299999999999955 289.4000000000001,38.299999999999955 L289.4000000000001,38.60000000000002 L8.700000000000045,38.60000000000002 Z" fill="#f4f1fd"/><path d="M8.700000000000045,35 C58,34.5 68,34.5 88,34.5 S229.4000000000001,38.299999999999955 289.4000000000001,38.299999999999955" fill="none" stroke="#7c3aed" stroke-width="1.6"/></svg>
<div class="r" style="left:1223px;top:514px;width:298px;height:135px;background:#fff;border-radius:7px;box-shadow:0 1px 3px rgba(0,0,0,0.08),0 0 1px rgba(0,0,0,0.12);"></div>
<div class="t" style="left:1234.7px;top:526.42px;font-size:12.5px;line-height:12.5px;color:#262c3a;font-weight:700;letter-spacing:-0.3px;">Best Practices Score</div>
<div class="t" style="left:1235.3px;top:558.77px;font-size:20px;line-height:20px;color:#111827;font-weight:400;letter-spacing:-0.2px;-webkit-text-stroke:0.35px #111827;">37</div>
<div class="t" style="left:1261.0px;top:562.34px;font-size:13.3px;line-height:13.3px;color:#6b7280;font-weight:400;">/ 100</div>
<div class="r" style="left:1234px;top:584px;width:59px;height:16px;background:#fdd5d6;border-radius:8px;"></div>
<svg class="r" style="left:1241px;top:587.5px;" width="8" height="10" viewBox="0 0 8 10"><path d="M4 0.8 V8.5 M1.3 5.6 L4 8.5 L6.7 5.6" fill="none" stroke="#ef4444" stroke-width="1.6"/></svg>
<div class="t" style="left:1252.3px;top:587.74px;font-size:10px;line-height:10px;color:#b3303d;font-weight:700;letter-spacing:0.1px;">52.56%</div>
<svg class="r" style="left:1223px;top:600px;" width="300" height="50" viewBox="0 0 300 50"><path d="M8.299999999999955,18.799999999999955 C54.90000000000009,18.799999999999955 64.90000000000009,18.799999999999955 84.90000000000009,18.799999999999955 S229,29.200000000000045 289,29.200000000000045 L289,38.60000000000002 L8.299999999999955,38.60000000000002 Z" fill="#f4f1fd"/><path d="M8.299999999999955,18.799999999999955 C54.90000000000009,18.799999999999955 64.90000000000009,18.799999999999955 84.90000000000009,18.799999999999955 S229,29.200000000000045 289,29.200000000000045" fill="none" stroke="#7c3aed" stroke-width="1.6"/></svg>
<div class="r" style="left:290px;top:662px;width:609px;height:120px;background:#fff;border-radius:7px;box-shadow:0 1px 3px rgba(0,0,0,0.08),0 0 1px rgba(0,0,0,0.12);"></div>
<div class="r" style="left:290px;top:705px;width:609px;height:1px;background:#e5e7eb;"></div>
<div class="t" style="left:302.6px;top:677.93px;font-size:12.6px;line-height:12.6px;color:#262c3a;font-weight:700;letter-spacing:-0.05px;">Top Changes</div>
<svg class="r" style="left:388px;top:676.5px;" width="14" height="14" viewBox="0 0 14 14"><circle cx="7.0" cy="7.0" r="6.2" fill="none" stroke="#4b5563" stroke-width="1.3"/><rect x="6.35" y="5.88" width="1.3" height="4.62" fill="#4b5563"/><circle cx="7.0" cy="3.9200000000000004" r="0.85" fill="#4b5563"/></svg>
<div class="r" style="left:912px;top:662px;width:609px;height:120px;background:#fff;border-radius:7px;box-shadow:0 1px 3px rgba(0,0,0,0.08),0 0 1px rgba(0,0,0,0.12);"></div>
<div class="r" style="left:912px;top:705px;width:609px;height:1px;background:#e5e7eb;"></div>
<div class="t" style="left:924px;top:677.73px;font-size:12.6px;line-height:12.6px;color:#262c3a;font-weight:700;letter-spacing:-0.05px;">Instances &amp; Issues</div>
<svg class="r" style="left:1043px;top:676.5px;" width="14" height="14" viewBox="0 0 14 14"><circle cx="7.0" cy="7.0" r="6.2" fill="none" stroke="#4b5563" stroke-width="1.3"/><rect x="6.35" y="5.88" width="1.3" height="4.62" fill="#4b5563"/><circle cx="7.0" cy="3.9200000000000004" r="0.85" fill="#4b5563"/></svg>
<div class="r" style="left:1417px;top:671px;width:26px;height:26px;background:#fff;border:1px solid #dfe2e8;border-radius:5px;box-sizing:border-box;"></div>
<svg class="r" style="left:1423px;top:677px;" width="14" height="14" viewBox="0 0 14 14"><g fill="none" stroke="#2f3747" stroke-width="1.4"><path d="M1 4.5 V1 H4.5 M9.5 1 H13 V4.5 M13 9.5 V13 H9.5 M4.5 13 H1 V9.5"/><path d="M1.5 1.5 L4.5 4.5 M12.5 1.5 L9.5 4.5 M12.5 12.5 L9.5 9.5 M1.5 12.5 L4.5 9.5"/></g></svg>
<div class="r" style="left:1449px;top:671px;width:26px;height:26px;background:#fff;border:1px solid #dfe2e8;border-radius:5px;box-sizing:border-box;"></div>
<svg class="r" style="left:1454px;top:676px;" width="16" height="16" viewBox="0 0 16 16"><g fill="#2f3747"><circle cx="8" cy="8" r="4.9"/><rect x="6.5" y="2" width="3" height="12" rx="1"/><rect x="6.5" y="2" width="3" height="12" rx="1" transform="rotate(45 8 8)"/><rect x="6.5" y="2" width="3" height="12" rx="1" transform="rotate(90 8 8)"/><rect x="6.5" y="2" width="3" height="12" rx="1" transform="rotate(135 8 8)"/></g><circle cx="8" cy="8" r="2" fill="#fff"/></svg>
<div class="r" style="left:1481px;top:671px;width:32px;height:26px;background:#fff;border:1px solid #dfe2e8;border-radius:5px;box-sizing:border-box;"></div>
<svg class="r" style="left:1490px;top:677px;" width="14" height="14" viewBox="0 0 14 14"><path d="M7 1 V8.5 M3.8 5.5 L7 8.8 L10.2 5.5" fill="none" stroke="#2f3747" stroke-width="1.7"/><rect x="1.5" y="11" width="11" height="1.8" fill="#2f3747"/></svg>
<div class="t" style="left:933px;top:728.11px;font-size:10.5px;line-height:10.5px;color:#374151;font-weight:400;">75k</div>
<div class="r" style="left:963px;top:732px;width:538px;height:1px;background:#eef0f3;"></div>
<svg class="r" style="left:960px;top:742px;" width="16" height="10" viewBox="0 0 16 10"><path d="M7.5 7.4 L9.8 12" stroke="#e63a96" stroke-width="3"/><circle cx="7.5" cy="7.4" r="2.8" fill="#e63a96"/></svg>
</body></html>
